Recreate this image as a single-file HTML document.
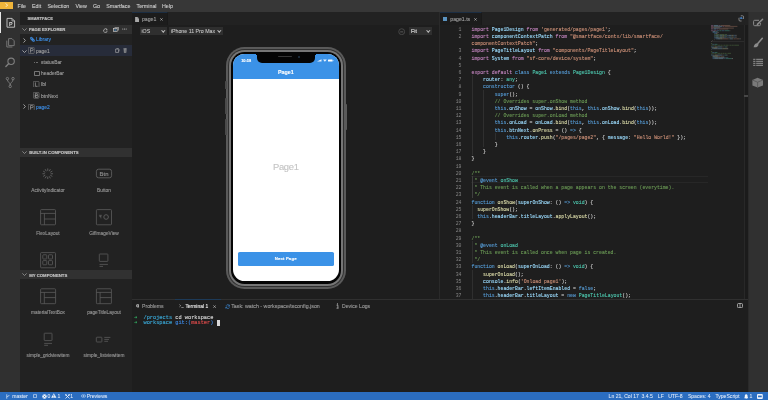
<!DOCTYPE html>
<html><head><meta charset="utf-8">
<style>
*{box-sizing:border-box;margin:0;padding:0}
html,body{width:768px;height:400px;overflow:hidden;}
body{will-change:transform;background:#1e1e1e;font-family:"Liberation Sans",sans-serif;}
.a{position:absolute}
.t{position:absolute;white-space:pre;line-height:1;-webkit-text-stroke:0.12px currentColor}
#menubar{left:0;top:0;width:768px;height:12px;background:#373737}
#menubar .m{position:absolute;top:2.8px;font-size:5.3px;color:#cdcdcd;-webkit-text-stroke:0.1px #cdcdcd;white-space:pre;line-height:6px}
#logo{left:0;top:1.5px;width:12.5px;height:7.5px;background:#efb43a}
#act{left:0;top:12px;width:20px;height:380px;background:#303030}
#side{left:20px;top:12px;width:112px;height:380px;background:#222222}
#ed1{left:132px;top:12px;width:308px;height:287px;background:#1e1e1e}
#ed2{left:440px;top:12px;width:308px;height:287px;background:#1e1e1e}
#panel{left:132px;top:299px;width:616px;height:93px;background:#1e1e1e;border-top:1px solid #303030}
#ract{left:748px;top:12px;width:20px;height:380px;background:#303030}
#status{left:0;top:392px;width:768px;height:8px;background:#2b6dc0}
.sh{left:0;width:112px;height:9px;background:#313131}
.sht{font-size:4.28px;font-weight:bold;color:#c8c8c8}
.tr{font-size:4.9px;color:#9e9e9e}
.box{border:0.7px solid #767676;border-radius:0.8px;}
.box span{position:absolute;left:0;right:0;top:0.5px;text-align:center;font-size:4.9px;line-height:1;color:#9a9a9a}
.lb{font-size:4.77px;color:#969696;text-align:center}
.sel{background:#2f2f2f}
.sel span{position:absolute;top:1.4px;font-size:5.27px;line-height:1;color:#c4c4c4;-webkit-text-stroke:0.08px #c4c4c4;white-space:pre}
.sel i{position:absolute;top:2.3px;width:2.6px;height:2.6px;border-right:0.8px solid #c0c0c0;border-bottom:0.8px solid #c0c0c0;transform:rotate(45deg)}
.cl{-webkit-text-stroke:0.1px currentColor;position:absolute;left:31.5px;height:7.2px;margin-top:-3.6px;line-height:7.2px;font-family:"Liberation Mono",monospace;font-size:4.83px;white-space:pre}
.ln{position:absolute;left:0;width:21.5px;text-align:right;height:7.2px;margin-top:-3.6px;line-height:7.2px;font-family:"Liberation Mono",monospace;font-size:4.83px;color:#858585}
.pt{font-size:5.1px;color:#9a9a9a}
.term{-webkit-text-stroke:0.15px currentColor;left:1.9px;margin-top:0.5px;font-family:"Liberation Mono",monospace;font-size:5.3px;color:#d0d0d0}
.st{top:1.9px;font-size:5.1px;color:#e6eefa;-webkit-text-stroke:0.04px #e6eefa}
</style></head><body>
<div id="menubar" class="a">
  <div id="logo" class="a"><svg class="a" style="left:4.6px;top:1.6px" width="3.4" height="4.4" viewBox="0 0 4 5"><path d="M0.6 0.5 L3.2 2.5 L0.6 4.5" fill="none" stroke="#fff6e0" stroke-width="0.9"/></svg></div>
  <div class="m" style="left:17.5px">File</div>
  <div class="m" style="left:32px">Edit</div>
  <div class="m" style="left:47.5px">Selection</div>
  <div class="m" style="left:75.5px">View</div>
  <div class="m" style="left:93px">Go</div>
  <div class="m" style="left:106.25px">Smartface</div>
  <div class="m" style="left:136.5px">Terminal</div>
  <div class="m" style="left:162px">Help</div>
</div>

<div id="act" class="a">
  <div class="a" style="left:0;top:0;width:1.1px;height:20.6px;background:#e8e8e8"></div>
  <svg class="a" style="left:0;top:0" width="20" height="80" viewBox="0 0 20 80">
    <g fill="none" stroke="#c8c8c8" stroke-width="0.9">
      <path d="M7 6.4 H12 L14.6 9 V15.2 H7 Z"/>
      <path d="M12 6.4 V9 H14.6" stroke-width="0.7"/>
    </g>
    <text x="10.7" y="14.1" text-anchor="middle" font-family="Liberation Sans" font-weight="bold" font-size="5.4" fill="#d8d8d8">P</text>
    <g fill="none" stroke="#7e7e7e" stroke-width="0.9">
      <path d="M8.6 26.6 H12 L14.2 28.8 V33.6 H8.6 Z"/>
      <path d="M6.8 28.6 V35 H12.4" />
    </g>
    <g fill="none" stroke="#7e7e7e" stroke-width="1.1">
      <circle cx="11.1" cy="49.3" r="3.2"/>
      <path d="M8.8 51.6 L5.9 54.6" stroke-width="1.4" stroke-linecap="round"/>
    </g>
    <g fill="none" stroke="#7e7e7e" stroke-width="0.9">
      <circle cx="7.4" cy="66.6" r="1.2"/>
      <circle cx="13" cy="66.6" r="1.2"/>
      <circle cx="10.2" cy="74.4" r="1.2"/>
      <path d="M7.4 67.8 C7.4 70 10.2 70.4 10.2 73.2 M13 67.8 C13 70 10.2 70.4 10.2 73.2"/>
    </g>
  </svg>
</div>


<div id="side" class="a">
  <div class="a" style="left:0;top:0;width:112px;height:13px;background:#212121"></div>
  <div class="t" style="left:7.5px;top:5.2px;font-size:4.1px;font-weight:bold;color:#c8c8c8">SMARTFACE</div>
  <!-- page explorer header -->
  <div class="a sh" style="top:13px"></div>
  <svg class="a" style="left:2.2px;top:16.2px" width="5" height="3" viewBox="0 0 5 3"><path d="M0.4 0.4 L2.5 2.5 L4.6 0.4" fill="none" stroke="#a8a8a8" stroke-width="0.7"/></svg>
  <div class="t sht" style="left:9px;top:16.1px">PAGE EXPLORER</div>
  <svg class="a" style="left:83.4px;top:15.6px" width="5" height="5" viewBox="0 0 10 10"><path d="M7.6 3 A3.6 3.6 0 1 0 8.4 5.6" fill="none" stroke="#bdbdbd" stroke-width="1.5"/><path d="M6.4 1.2 L8.6 3.2 L5.8 4" fill="none" stroke="#bdbdbd" stroke-width="1.3"/></svg>
  <svg class="a" style="left:93px;top:15px" width="6" height="5" viewBox="0 0 12 10"><rect x="0.8" y="2.8" width="7.6" height="6.4" fill="none" stroke="#c8c8c8" stroke-width="1.4"/><path d="M3 0.8 H11.2 V7" fill="none" stroke="#c8c8c8" stroke-width="1.3"/><rect x="2.6" y="4.8" width="4" height="2.6" fill="#4a86b8"/></svg>
  <svg class="a" style="left:101.8px;top:16px" width="5" height="2" viewBox="0 0 5 2"><circle cx="0.8" cy="1" r="0.55" fill="#c0c0c0"/><circle cx="2.5" cy="1" r="0.55" fill="#c0c0c0"/><circle cx="4.2" cy="1" r="0.55" fill="#c0c0c0"/></svg>
  <!-- library row -->
  <svg class="a" style="left:3.1px;top:26.3px" width="3" height="5" viewBox="0 0 3 5"><path d="M0.5 0.4 L2.4 2.5 L0.5 4.6" fill="none" stroke="#b0b0b0" stroke-width="0.85"/></svg>
  <svg class="a" style="left:9px;top:24px" width="8" height="8" viewBox="0 0 8 8"><path d="M2.3 2.3 L4.6 4.6" stroke="#3b82d0" stroke-width="2.7" stroke-linecap="round"/><circle cx="2.2" cy="2.2" r="0.55" fill="#26405e"/><circle cx="4.7" cy="4.7" r="0.55" fill="#26405e"/></svg>
  <div class="t tr" style="left:16px;top:26.3px;color:#3d8ee6">Library</div>
  <!-- page1 row selected -->
  <div class="a" style="left:0;top:33.2px;width:112px;height:11px;background:#272c3a"></div>
  <svg class="a" style="left:2.4px;top:37.6px" width="5" height="3" viewBox="0 0 5 3"><path d="M0.4 0.4 L2.5 2.5 L4.6 0.4" fill="none" stroke="#b0b0b0" stroke-width="0.85"/></svg>
  <svg class="a" style="left:8px;top:35.3px" width="6.6" height="6.8" viewBox="0 0 6.6 6.8"><rect x="0.35" y="0.35" width="5.9" height="6.1" rx="0.8" fill="none" stroke="#767676" stroke-width="0.7"/><path d="M2.5 5.6 V1.5 H4 A1.1 1.1 0 0 1 4 3.7 H2.5" fill="none" stroke="#a0a0a0" stroke-width="0.7"/></svg>
  <div class="t tr" style="left:16px;top:37.5px">page1</div>
  <svg class="a" style="left:95.2px;top:36.4px" width="4.6" height="4.8" viewBox="0 0 9 10"><path d="M1 2.2 H5.4 L7.2 4 V9.2 H1 Z" fill="none" stroke="#bdbdbd" stroke-width="1.2"/><path d="M3 1 H7 L8.2 2.2 V7" fill="none" stroke="#bdbdbd" stroke-width="1"/></svg>
  <svg class="a" style="left:103.4px;top:36.2px" width="4.2" height="5" viewBox="0 0 8 9.5"><path d="M0.4 1.6 H7.6 M2.8 0.6 H5.2" stroke="#bdbdbd" stroke-width="1"/><path d="M1.4 2.6 H6.6 L6.2 9 H1.8 Z" fill="#9a9a9a"/><path d="M3.2 3.6 V8 M4.8 3.6 V8" stroke="#2a3040" stroke-width="0.6"/></svg>
  <!-- children -->
  <div class="a" style="left:13.6px;top:49.8px;width:5.6px;height:0.9px;background:repeating-linear-gradient(90deg,#6c6c6c 0 1.1px,transparent 1.1px 1.5px)"></div>
  <div class="t tr" style="left:21.1px;top:48.8px">statusBar</div>
  <div class="a" style="left:13.8px;top:58.8px;width:5.8px;height:4.8px;border:0.7px solid #767676;border-top-width:1px;border-radius:0.8px"></div>
  <div class="t tr" style="left:21.1px;top:60.1px">headerBar</div>
  <svg class="a" style="left:13.4px;top:68.9px" width="6.4" height="6.6" viewBox="0 0 6.4 6.6"><rect x="0.35" y="0.35" width="5.7" height="5.9" rx="0.8" fill="none" stroke="#767676" stroke-width="0.7"/><path d="M2.4 1.4 V5.3 H4.5" fill="none" stroke="#a0a0a0" stroke-width="0.7"/></svg>
  <div class="t tr" style="left:21.1px;top:71.3px">lbl</div>
  <svg class="a" style="left:13.4px;top:80.2px" width="6.4" height="6.6" viewBox="0 0 6.4 6.6"><rect x="0.35" y="0.35" width="5.7" height="5.9" rx="0.8" fill="none" stroke="#767676" stroke-width="0.7"/><path d="M2.3 1.4 H3.9 A1 1 0 0 1 3.9 3.3 H2.3 M2.3 3.3 H4.1 A1.05 1.05 0 0 1 4.1 5.4 H2.3 Z M2.3 1.4 V5.4" fill="none" stroke="#a0a0a0" stroke-width="0.7"/></svg>
  <div class="t tr" style="left:21.1px;top:82.6px">btnNext</div>
  <!-- page2 -->
  <svg class="a" style="left:3.1px;top:92.4px" width="3" height="5" viewBox="0 0 3 5"><path d="M0.5 0.4 L2.4 2.5 L0.5 4.6" fill="none" stroke="#b0b0b0" stroke-width="0.85"/></svg>
  <svg class="a" style="left:8px;top:91.5px" width="6.6" height="6.8" viewBox="0 0 6.6 6.8"><rect x="0.35" y="0.35" width="5.9" height="6.1" rx="0.8" fill="none" stroke="#767676" stroke-width="0.7"/><path d="M2.5 5.6 V1.5 H4 A1.1 1.1 0 0 1 4 3.7 H2.5" fill="none" stroke="#a0a0a0" stroke-width="0.7"/></svg>
  <div class="t tr" style="left:16px;top:93.8px;color:#3d8ee6">page2</div>

  <!-- built in components -->
  <div class="a sh" style="top:136px"></div>
  <svg class="a" style="left:2.2px;top:139.2px" width="5" height="3" viewBox="0 0 5 3"><path d="M0.4 0.4 L2.5 2.5 L4.6 0.4" fill="none" stroke="#a8a8a8" stroke-width="0.7"/></svg>
  <div class="t sht" style="left:9.2px;top:139.1px">BUILT-IN COMPONENTS</div>

  <!-- component grid (coordinates relative to sidebar: abs x-20, y-12) -->
  <svg class="a" style="left:0;top:0" width="112" height="380" viewBox="0 0 112 380">
    <g fill="none" stroke="#5c5c5c" stroke-width="0.8">
      <!-- spinner center 27.75,161.75 -->
      <g stroke="#5c5c5c" stroke-width="1" stroke-linecap="round"><path d="M31.05 161.75 L32.65 161.75 M30.61 163.40 L31.99 164.20 M29.40 164.61 L30.20 165.99 M27.75 165.05 L27.75 166.65 M26.10 164.61 L25.30 165.99 M24.89 163.40 L23.51 164.20 M24.45 161.75 L22.85 161.75 M24.89 160.10 L23.51 159.30 M26.10 158.89 L25.30 157.51 M27.75 158.45 L27.75 156.85 M29.40 158.89 L30.20 157.51 M30.61 160.10 L31.99 159.30"/></g>
      <!-- Btn -->
      <rect x="76.4" y="157.2" width="15.2" height="8.6" rx="2.2" stroke="#707070" stroke-width="0.7"/>
      <!-- FlexLayout -->
      <rect x="20.6" y="197.6" width="14.9" height="15.2" rx="0.8"/>
      <path d="M20.6 201.4 H35.5 M24.4 201.4 V212.8 M24.4 207 H35.5"/>
      <!-- GifImageView -->
      <rect x="76.4" y="197.6" width="15.1" height="15.2" rx="0.8"/>
      <circle cx="86.1" cy="205" r="2.3" stroke-width="0.95"/>
      <path d="M78.9 203.3 H81.9 M80.4 203.3 L81 206.4 M79.4 204.5 H81.4" stroke-width="0.75"/>
      <!-- GridView -->
      <rect x="20.6" y="240.6" width="14.9" height="15.2" rx="0.8"/>
      <rect x="22.8" y="242.8" width="4" height="4.2" rx="0.6"/>
      <rect x="28.5" y="242.8" width="4" height="4.2" rx="0.6"/>
      <rect x="22.8" y="248.6" width="4" height="4.2" rx="0.6"/>
      <rect x="28.5" y="248.6" width="4" height="4.2" rx="0.6"/>
      <!-- gridview item -->
      <rect x="79.3" y="242" width="8.6" height="7.4" rx="0.5"/>
      <path d="M79.5 252.4 H87.9 M79.5 254.4 H83"/>
      <!-- materialTextBox -->
      <rect x="20.6" y="276.8" width="15" height="14.9" rx="0.8"/>
      <path d="M20.6 280.4 H35.6 M24.3 280.4 V291.7 M24.3 285.6 H35.6"/>
      <!-- pageTitleLayout -->
      <rect x="76.4" y="276.8" width="15" height="14.9" rx="0.8"/>
      <path d="M76.4 280.4 H91.4 M80.1 280.4 V291.7 M80.1 285.6 H91.4"/>
      <!-- simple_gridviewitem -->
      <rect x="24.2" y="321.2" width="7.8" height="7.4" rx="0.5"/>
      <path d="M24.2 331.4 H32 M24.2 333.3 H28"/>
      <!-- simple_listviewitem -->
      <rect x="76.3" y="325.2" width="5.6" height="4.8" rx="0.6"/>
      <path d="M84.3 325.4 H90.4 M84.3 327.4 H89 M84.3 329.3 H88"/>
    </g>
    <text x="84" y="164.4" text-anchor="middle" font-family="Liberation Sans" font-size="5.9" fill="#8e8e8e" stroke="#8e8e8e" stroke-width="0.15">Btn</text>
  </svg>
  <div class="t lb" style="left:0;width:56px;top:176.5px">ActivityIndicator</div>
  <div class="t lb" style="left:56px;width:56px;top:176.5px">Button</div>
  <div class="t lb" style="left:0;width:56px;top:219.5px">FlexLayout</div>
  <div class="t lb" style="left:56px;width:56px;top:219.5px">GifImageView</div>
  <div class="t lb" style="left:0;width:56px;top:298.9px">materialTextBox</div>
  <div class="t lb" style="left:56px;width:56px;top:298.9px">pageTitleLayout</div>
  <div class="t lb" style="left:0;width:56px;top:342.3px">simple_gridviewitem</div>
  <div class="t lb" style="left:56px;width:56px;top:342.3px">simple_listviewitem</div>
  <!-- my components -->
  <div class="a sh" style="top:257.8px"></div>
  <svg class="a" style="left:2.2px;top:261.1px" width="5" height="3" viewBox="0 0 5 3"><path d="M0.4 0.4 L2.5 2.5 L4.6 0.4" fill="none" stroke="#a8a8a8" stroke-width="0.7"/></svg>
  <div class="t sht" style="left:9.2px;top:261.5px">MY COMPONENTS</div>
</div>


<div id="ed1" class="a">
  <div class="a" style="left:0;top:0;width:308px;height:13px;background:#222222"></div>
  <div class="a" style="left:0;top:0;width:36px;height:13px;background:#1c1c1c;border-top:0.8px solid #1b2d42;border-right:0.6px solid #191919"></div>
  <svg class="a" style="left:2.8px;top:4.6px" width="4.2" height="5" viewBox="0 0 8 10"><path d="M0 0 H5 L8 3 V10 H0 Z" fill="#a8a8a8"/><path d="M5 0 V3 H8" fill="#666"/></svg>
  <div class="t" style="left:9.9px;top:4.7px;font-size:5.2px;color:#9d9d9d">page1</div>
  <svg class="a" style="left:28.2px;top:6px" width="2.9" height="2.9" viewBox="0 0 3 3"><path d="M0.3 0.3 L2.7 2.7 M2.7 0.3 L0.3 2.7" stroke="#bdbdbd" stroke-width="0.7"/></svg>
  <!-- toolbar -->
  <div class="a sel" style="left:7.8px;top:15.2px;width:27px;height:7.7px"><span style="left:1.6px">iOS</span><i style="left:22px"></i></div>
  <div class="a sel" style="left:37.2px;top:15.2px;width:53.5px;height:7.7px"><span style="left:1.6px">iPhone 11 Pro Max</span><i style="left:48.8px"></i></div>
  <svg class="a" style="left:265.8px;top:16px" width="7.4" height="7.4" viewBox="0 0 10 10"><circle cx="5" cy="5" r="4" fill="none" stroke="#505050" stroke-width="1.1"/><path d="M3 4.4 H7 V6 H3 Z" fill="#505050"/></svg>
  <div class="a sel" style="left:277px;top:15.3px;width:22.7px;height:7.5px"><span style="left:2px;color:#d0d0d0;-webkit-text-stroke:0.2px #d0d0d0">Fit</span><i style="left:18.2px;top:1.9px"></i></div>
  <!-- phone -->
  <div class="a" style="left:94px;top:35px;width:120px;height:242px;border-radius:18.5px;background:#5a5a5a">
    <div class="a" style="left:-1px;top:33.5px;width:1.6px;height:8.7px;background:#4a4a4a;border-radius:0.6px"></div>
    <div class="a" style="left:-1px;top:51px;width:1.6px;height:16.2px;background:#4a4a4a;border-radius:0.6px"></div>
    <div class="a" style="left:-1px;top:72.2px;width:1.6px;height:16.2px;background:#4a4a4a;border-radius:0.6px"></div>
    <div class="a" style="left:118.6px;top:56.7px;width:2.6px;height:26.3px;background:#5a5a5a;border-radius:0.8px"></div>
    <div class="a" style="left:2px;top:2px;right:2px;bottom:2px;border-radius:16.5px;background:#303030"></div>
    <div class="a" style="left:3px;top:3px;right:3px;bottom:3px;border-radius:15.5px;background:#767676"></div>
    <div class="a" style="left:5px;top:4.6px;right:5px;bottom:5px;border-radius:13.5px;background:#050505"></div>
    <div class="a" style="left:7px;top:6.6px;right:7.4px;bottom:8px;border-radius:11.5px;background:#ffffff;overflow:hidden">
      <div class="a" style="left:0;top:0;width:100%;height:25.5px;background:#3b92e7"></div>
      <div class="a" style="left:23.6px;top:-1px;width:58.6px;height:10.5px;background:#050505;border-radius:0 0 5px 5px"></div>
      <div class="a" style="left:20.8px;top:0;width:2.8px;height:2.8px;background:radial-gradient(circle at 0 100%,transparent 2.8px,#050505 2.9px)"></div>
      <div class="a" style="left:82.2px;top:0;width:2.8px;height:2.8px;background:radial-gradient(circle at 100% 100%,transparent 2.8px,#050505 2.9px)"></div>
      <div class="a" style="left:44.6px;top:2.5px;width:14.5px;height:1px;background:#363636;border-radius:1px"></div>
      <div class="a" style="left:65.2px;top:2.1px;width:2px;height:2px;background:#213548;border-radius:50%"></div>
      <div class="t" style="left:8.2px;top:5.4px;font-size:3.9px;font-weight:bold;color:#fff">10:58</div>
      <svg class="a" style="left:83.6px;top:5.2px" width="17.2" height="3" viewBox="0 0 17.2 3"><path d="M0 2.6 H4.5 V0.3 Z" fill="#e8f1fc"/><path d="M6 0.4 H9.8 L7.9 2.8 Z" fill="#eef5fd"/><rect x="11" y="0.5" width="4.6" height="2.1" rx="0.4" fill="#ffffff"/><rect x="15.7" y="1" width="0.8" height="1.1" fill="#b8d6f7"/></svg>
      <div class="t" style="left:0;width:100%;text-align:center;top:16.4px;font-size:5.3px;font-weight:bold;color:#fff">Page1</div>
      <div class="t" style="left:0;width:100%;text-align:center;top:108.6px;font-size:9.4px;letter-spacing:-0.25px;color:#c4c4c4">Page1</div>
      <div class="a" style="left:4.8px;top:198.5px;width:95.8px;height:14px;background:#3b92e7;border-radius:1.6px"></div>
      <div class="t" style="left:4.8px;width:95.8px;text-align:center;top:203.4px;font-size:4.25px;letter-spacing:0.16px;font-weight:bold;color:#fff">Next Page</div>
    </div>
  </div>
  <div class="a" style="left:307.3px;top:0;width:0.9px;height:287px;background:#2a2a2a"></div>
</div>


<div id="ed2" class="a">
  <div class="a" style="left:0;top:0;width:308px;height:13px;background:#222222"></div>
  <div class="a" style="left:0;top:0;width:41.8px;height:13px;background:#1c1c1c;border-top:0.8px solid #1b2d42;border-right:0.6px solid #191919"></div>
  <div class="a" style="left:3.3px;top:4.6px;width:4.2px;height:4.4px;background:#5b93c0"></div>
  <div class="t" style="left:10.3px;top:4.7px;font-size:5.2px;color:#9d9d9d">page1.ts</div>
  <svg class="a" style="left:34.4px;top:6px" width="2.9" height="2.9" viewBox="0 0 3 3"><path d="M0.3 0.3 L2.7 2.7 M2.7 0.3 L0.3 2.7" stroke="#bdbdbd" stroke-width="0.7"/></svg>
  <svg class="a" style="left:298px;top:3px" width="6.4" height="6.8" viewBox="0 0 16 17"><path d="M2.5 7 V12.5 A2.5 2.5 0 0 0 5 15 H9" fill="none" stroke="#9a9a9a" stroke-width="2"/><path d="M7 2 H11.5 A2.5 2.5 0 0 1 14 4.5 V10" fill="none" stroke="#9a9a9a" stroke-width="2"/><path d="M3.5 7 L9 5 L12.5 8.5 L7 10.5 Z" fill="#4177b4"/></svg>
  <!-- current line highlight line 21 -->
  <div class="a" style="left:31px;top:164.4px;width:237.3px;height:6.6px;border-top:0.6px solid #272727;border-bottom:0.6px solid #272727"></div>
  <div class="a" style="left:0;top:0;width:308px;height:287px;overflow:hidden">
  <div id="codewrap" class="a" style="left:0;top:-12px;width:308px;height:300px">
<div class="a" style="left:31.50px;top:75.40px;width:0.6px;height:7.20px;background:#2f2f2f"></div>
<div class="a" style="left:31.50px;top:82.60px;width:0.6px;height:7.20px;background:#2f2f2f"></div>
<div class="a" style="left:31.50px;top:89.80px;width:0.6px;height:7.20px;background:#2f2f2f"></div>
<div class="a" style="left:43.10px;top:89.80px;width:0.6px;height:7.20px;background:#2f2f2f"></div>
<div class="a" style="left:31.50px;top:97.00px;width:0.6px;height:7.20px;background:#2f2f2f"></div>
<div class="a" style="left:43.10px;top:97.00px;width:0.6px;height:7.20px;background:#2f2f2f"></div>
<div class="a" style="left:31.50px;top:104.20px;width:0.6px;height:7.20px;background:#2f2f2f"></div>
<div class="a" style="left:43.10px;top:104.20px;width:0.6px;height:7.20px;background:#2f2f2f"></div>
<div class="a" style="left:31.50px;top:111.40px;width:0.6px;height:7.20px;background:#2f2f2f"></div>
<div class="a" style="left:43.10px;top:111.40px;width:0.6px;height:7.20px;background:#2f2f2f"></div>
<div class="a" style="left:31.50px;top:118.60px;width:0.6px;height:7.20px;background:#2f2f2f"></div>
<div class="a" style="left:43.10px;top:118.60px;width:0.6px;height:7.20px;background:#2f2f2f"></div>
<div class="a" style="left:31.50px;top:125.80px;width:0.6px;height:7.20px;background:#2f2f2f"></div>
<div class="a" style="left:43.10px;top:125.80px;width:0.6px;height:7.20px;background:#2f2f2f"></div>
<div class="a" style="left:31.50px;top:133.00px;width:0.6px;height:7.20px;background:#2f2f2f"></div>
<div class="a" style="left:43.10px;top:133.00px;width:0.6px;height:7.20px;background:#2f2f2f"></div>
<div class="a" style="left:54.70px;top:133.00px;width:0.6px;height:7.20px;background:#2f2f2f"></div>
<div class="a" style="left:31.50px;top:140.20px;width:0.6px;height:7.20px;background:#2f2f2f"></div>
<div class="a" style="left:43.10px;top:140.20px;width:0.6px;height:7.20px;background:#2f2f2f"></div>
<div class="a" style="left:31.50px;top:147.40px;width:0.6px;height:7.20px;background:#2f2f2f"></div>
<div class="a" style="left:31.50px;top:176.20px;width:0.6px;height:7.20px;background:#404040"></div>
<div class="a" style="left:31.50px;top:183.40px;width:0.6px;height:7.20px;background:#404040"></div>
<div class="a" style="left:31.50px;top:190.60px;width:0.6px;height:7.20px;background:#404040"></div>
<div class="a" style="left:31.50px;top:205.00px;width:0.6px;height:7.20px;background:#2f2f2f"></div>
<div class="a" style="left:31.50px;top:212.20px;width:0.6px;height:7.20px;background:#2f2f2f"></div>
<div class="a" style="left:31.50px;top:241.00px;width:0.6px;height:7.20px;background:#2f2f2f"></div>
<div class="a" style="left:31.50px;top:248.20px;width:0.6px;height:7.20px;background:#2f2f2f"></div>
<div class="a" style="left:31.50px;top:255.40px;width:0.6px;height:7.20px;background:#2f2f2f"></div>
<div class="a" style="left:31.50px;top:269.80px;width:0.6px;height:7.20px;background:#2f2f2f"></div>
<div class="a" style="left:31.50px;top:277.00px;width:0.6px;height:7.20px;background:#2f2f2f"></div>
<div class="a" style="left:31.50px;top:284.20px;width:0.6px;height:7.20px;background:#2f2f2f"></div>
<div class="a" style="left:31.50px;top:291.40px;width:0.6px;height:7.20px;background:#2f2f2f"></div>
<div class="cl" style="top:29.35px"><span style="color:#c586c0">import</span><span style="color:#d4d4d4"> </span><span style="color:#9cdcfe">Page1Design</span><span style="color:#d4d4d4"> </span><span style="color:#c586c0">from</span><span style="color:#d4d4d4"> </span><span style="color:#ce9178">&#x27;generated/pages/page1&#x27;</span><span style="color:#d4d4d4">;</span></div>
<div class="ln" style="top:29.35px">1</div>
<div class="cl" style="top:36.55px"><span style="color:#c586c0">import</span><span style="color:#d4d4d4"> </span><span style="color:#9cdcfe">componentContextPatch</span><span style="color:#d4d4d4"> </span><span style="color:#c586c0">from</span><span style="color:#d4d4d4"> </span><span style="color:#ce9178">&quot;@smartface/contx/lib/smartface/</span></div>
<div class="ln" style="top:36.55px">2</div>
<div class="cl" style="top:43.75px"><span style="color:#ce9178">componentContextPatch&quot;</span><span style="color:#d4d4d4">;</span></div>
<div class="cl" style="top:50.95px"><span style="color:#c586c0">import</span><span style="color:#d4d4d4"> </span><span style="color:#9cdcfe">PageTitleLayout</span><span style="color:#d4d4d4"> </span><span style="color:#c586c0">from</span><span style="color:#d4d4d4"> </span><span style="color:#ce9178">&quot;components/PageTitleLayout&quot;</span><span style="color:#d4d4d4">;</span></div>
<div class="ln" style="top:50.95px">3</div>
<div class="cl" style="top:58.15px"><span style="color:#c586c0">import</span><span style="color:#d4d4d4"> </span><span style="color:#9cdcfe">System</span><span style="color:#d4d4d4"> </span><span style="color:#c586c0">from</span><span style="color:#d4d4d4"> </span><span style="color:#ce9178">&quot;sf-core/device/system&quot;</span><span style="color:#d4d4d4">;</span></div>
<div class="ln" style="top:58.15px">4</div>
<div class="cl" style="top:65.35px"></div>
<div class="ln" style="top:65.35px">5</div>
<div class="cl" style="top:72.55px"><span style="color:#c586c0">export</span><span style="color:#d4d4d4"> </span><span style="color:#c586c0">default</span><span style="color:#d4d4d4"> </span><span style="color:#569cd6">class</span><span style="color:#d4d4d4"> </span><span style="color:#4ec9b0">Page1</span><span style="color:#d4d4d4"> </span><span style="color:#569cd6">extends</span><span style="color:#d4d4d4"> </span><span style="color:#4ec9b0">Page1Design</span><span style="color:#d4d4d4"> {</span></div>
<div class="ln" style="top:72.55px">6</div>
<div class="cl" style="top:79.75px"><span style="color:#d4d4d4">    </span><span style="color:#9cdcfe">router</span><span style="color:#d4d4d4">: </span><span style="color:#4ec9b0">any</span><span style="color:#d4d4d4">;</span></div>
<div class="ln" style="top:79.75px">7</div>
<div class="cl" style="top:86.95px"><span style="color:#d4d4d4">    </span><span style="color:#569cd6">constructor</span><span style="color:#d4d4d4"> () {</span></div>
<div class="ln" style="top:86.95px">8</div>
<div class="cl" style="top:94.15px"><span style="color:#d4d4d4">        </span><span style="color:#569cd6">super</span><span style="color:#d4d4d4">();</span></div>
<div class="ln" style="top:94.15px">9</div>
<div class="cl" style="top:101.35px"><span style="color:#d4d4d4">        </span><span style="color:#6a9955">// Overrides super.onShow method</span></div>
<div class="ln" style="top:101.35px">10</div>
<div class="cl" style="top:108.55px"><span style="color:#d4d4d4">        </span><span style="color:#569cd6">this</span><span style="color:#d4d4d4">.</span><span style="color:#9cdcfe">onShow</span><span style="color:#d4d4d4"> = </span><span style="color:#9cdcfe">onShow</span><span style="color:#d4d4d4">.</span><span style="color:#dcdcaa">bind</span><span style="color:#d4d4d4">(</span><span style="color:#569cd6">this</span><span style="color:#d4d4d4">, </span><span style="color:#569cd6">this</span><span style="color:#d4d4d4">.</span><span style="color:#9cdcfe">onShow</span><span style="color:#d4d4d4">.</span><span style="color:#dcdcaa">bind</span><span style="color:#d4d4d4">(</span><span style="color:#569cd6">this</span><span style="color:#d4d4d4">));</span></div>
<div class="ln" style="top:108.55px">11</div>
<div class="cl" style="top:115.75px"><span style="color:#d4d4d4">        </span><span style="color:#6a9955">// Overrides super.onLoad method</span></div>
<div class="ln" style="top:115.75px">12</div>
<div class="cl" style="top:122.95px"><span style="color:#d4d4d4">        </span><span style="color:#569cd6">this</span><span style="color:#d4d4d4">.</span><span style="color:#9cdcfe">onLoad</span><span style="color:#d4d4d4"> = </span><span style="color:#9cdcfe">onLoad</span><span style="color:#d4d4d4">.</span><span style="color:#dcdcaa">bind</span><span style="color:#d4d4d4">(</span><span style="color:#569cd6">this</span><span style="color:#d4d4d4">, </span><span style="color:#569cd6">this</span><span style="color:#d4d4d4">.</span><span style="color:#9cdcfe">onLoad</span><span style="color:#d4d4d4">.</span><span style="color:#dcdcaa">bind</span><span style="color:#d4d4d4">(</span><span style="color:#569cd6">this</span><span style="color:#d4d4d4">));</span></div>
<div class="ln" style="top:122.95px">13</div>
<div class="cl" style="top:130.15px"><span style="color:#d4d4d4">        </span><span style="color:#569cd6">this</span><span style="color:#d4d4d4">.</span><span style="color:#9cdcfe">btnNext</span><span style="color:#d4d4d4">.</span><span style="color:#dcdcaa">onPress</span><span style="color:#d4d4d4"> = () </span><span style="color:#569cd6">=&gt;</span><span style="color:#d4d4d4"> {</span></div>
<div class="ln" style="top:130.15px">14</div>
<div class="cl" style="top:137.35px"><span style="color:#d4d4d4">            </span><span style="color:#569cd6">this</span><span style="color:#d4d4d4">.</span><span style="color:#9cdcfe">router</span><span style="color:#d4d4d4">.</span><span style="color:#dcdcaa">push</span><span style="color:#d4d4d4">(</span><span style="color:#ce9178">&quot;/pages/page2&quot;</span><span style="color:#d4d4d4">, { </span><span style="color:#9cdcfe">message</span><span style="color:#d4d4d4">: </span><span style="color:#ce9178">&quot;Hello World!&quot;</span><span style="color:#d4d4d4"> });</span></div>
<div class="ln" style="top:137.35px">15</div>
<div class="cl" style="top:144.55px"><span style="color:#d4d4d4">        }</span></div>
<div class="ln" style="top:144.55px">16</div>
<div class="cl" style="top:151.75px"><span style="color:#d4d4d4">    }</span></div>
<div class="ln" style="top:151.75px">17</div>
<div class="cl" style="top:158.95px"><span style="color:#d4d4d4">}</span></div>
<div class="ln" style="top:158.95px">18</div>
<div class="cl" style="top:166.15px"></div>
<div class="ln" style="top:166.15px">19</div>
<div class="cl" style="top:173.35px"><span style="color:#6a9955">/**</span></div>
<div class="ln" style="top:173.35px">20</div>
<div class="cl" style="top:180.55px"><span style="color:#6a9955"> * </span><span style="color:#569cd6">@event</span><span style="color:#6a9955"> </span><span style="color:#4ec9b0">onShow</span></div>
<div class="ln" style="top:180.55px">21</div>
<div class="cl" style="top:187.75px"><span style="color:#6a9955"> * This event is called when a page appears on the screen (everytime).</span></div>
<div class="ln" style="top:187.75px">22</div>
<div class="cl" style="top:194.95px"><span style="color:#6a9955"> */</span></div>
<div class="ln" style="top:194.95px">23</div>
<div class="cl" style="top:202.15px"><span style="color:#569cd6">function</span><span style="color:#d4d4d4"> </span><span style="color:#dcdcaa">onShow</span><span style="color:#d4d4d4">(</span><span style="color:#9cdcfe">superOnShow</span><span style="color:#d4d4d4">: () </span><span style="color:#569cd6">=&gt;</span><span style="color:#d4d4d4"> </span><span style="color:#4ec9b0">void</span><span style="color:#d4d4d4">) {</span></div>
<div class="ln" style="top:202.15px">24</div>
<div class="cl" style="top:209.35px"><span style="color:#d4d4d4">  </span><span style="color:#dcdcaa">superOnShow</span><span style="color:#d4d4d4">();</span></div>
<div class="ln" style="top:209.35px">25</div>
<div class="cl" style="top:216.55px"><span style="color:#d4d4d4">  </span><span style="color:#569cd6">this</span><span style="color:#d4d4d4">.</span><span style="color:#9cdcfe">headerBar</span><span style="color:#d4d4d4">.</span><span style="color:#9cdcfe">titleLayout</span><span style="color:#d4d4d4">.</span><span style="color:#dcdcaa">applyLayout</span><span style="color:#d4d4d4">();</span></div>
<div class="ln" style="top:216.55px">26</div>
<div class="cl" style="top:223.75px"><span style="color:#d4d4d4">}</span></div>
<div class="ln" style="top:223.75px">27</div>
<div class="cl" style="top:230.95px"></div>
<div class="ln" style="top:230.95px">28</div>
<div class="cl" style="top:238.15px"><span style="color:#6a9955">/**</span></div>
<div class="ln" style="top:238.15px">29</div>
<div class="cl" style="top:245.35px"><span style="color:#6a9955"> * </span><span style="color:#569cd6">@event</span><span style="color:#6a9955"> </span><span style="color:#4ec9b0">onLoad</span></div>
<div class="ln" style="top:245.35px">30</div>
<div class="cl" style="top:252.55px"><span style="color:#6a9955"> * This event is called once when page is created.</span></div>
<div class="ln" style="top:252.55px">31</div>
<div class="cl" style="top:259.75px"><span style="color:#6a9955"> */</span></div>
<div class="ln" style="top:259.75px">32</div>
<div class="cl" style="top:266.95px"><span style="color:#569cd6">function</span><span style="color:#d4d4d4"> </span><span style="color:#dcdcaa">onLoad</span><span style="color:#d4d4d4">(</span><span style="color:#9cdcfe">superOnLoad</span><span style="color:#d4d4d4">: () </span><span style="color:#569cd6">=&gt;</span><span style="color:#d4d4d4"> </span><span style="color:#4ec9b0">void</span><span style="color:#d4d4d4">) {</span></div>
<div class="ln" style="top:266.95px">33</div>
<div class="cl" style="top:274.15px"><span style="color:#d4d4d4">    </span><span style="color:#dcdcaa">superOnLoad</span><span style="color:#d4d4d4">();</span></div>
<div class="ln" style="top:274.15px">34</div>
<div class="cl" style="top:281.35px"><span style="color:#d4d4d4">    </span><span style="color:#9cdcfe">console</span><span style="color:#d4d4d4">.</span><span style="color:#dcdcaa">info</span><span style="color:#d4d4d4">(</span><span style="color:#ce9178">&#x27;Onload page1&#x27;</span><span style="color:#d4d4d4">);</span></div>
<div class="ln" style="top:281.35px">35</div>
<div class="cl" style="top:288.55px"><span style="color:#d4d4d4">    </span><span style="color:#569cd6">this</span><span style="color:#d4d4d4">.</span><span style="color:#9cdcfe">headerBar</span><span style="color:#d4d4d4">.</span><span style="color:#9cdcfe">leftItemEnabled</span><span style="color:#d4d4d4"> = </span><span style="color:#569cd6">false</span><span style="color:#d4d4d4">;</span></div>
<div class="ln" style="top:288.55px">36</div>
<div class="cl" style="top:295.75px"><span style="color:#d4d4d4">    </span><span style="color:#569cd6">this</span><span style="color:#d4d4d4">.</span><span style="color:#9cdcfe">headerBar</span><span style="color:#d4d4d4">.</span><span style="color:#9cdcfe">titleLayout</span><span style="color:#d4d4d4"> = </span><span style="color:#569cd6">new</span><span style="color:#d4d4d4"> </span><span style="color:#4ec9b0">PageTitleLayout</span><span style="color:#d4d4d4">();</span></div>
<div class="ln" style="top:295.75px">37</div>
  </div>
  </div>
  <div class="a" style="left:271px;top:29.2px;width:33px;height:1.2px;background:#2c2c2c"></div>
<svg class="a" style="left:271px;top:13px;opacity:0.45" width="33" height="36" viewBox="0 0 33 36"><rect x="0.00" y="0.00" width="2.40" height="0.75" fill="#c586c0"/><rect x="2.80" y="0.00" width="4.40" height="0.75" fill="#9cdcfe"/><rect x="7.60" y="0.00" width="1.60" height="0.75" fill="#c586c0"/><rect x="9.60" y="0.00" width="9.20" height="0.75" fill="#ce9178"/><rect x="18.80" y="0.00" width="0.40" height="0.75" fill="#d4d4d4"/><rect x="0.00" y="0.90" width="2.40" height="0.75" fill="#c586c0"/><rect x="2.80" y="0.90" width="8.40" height="0.75" fill="#9cdcfe"/><rect x="11.60" y="0.90" width="1.60" height="0.75" fill="#c586c0"/><rect x="13.60" y="0.90" width="12.80" height="0.75" fill="#ce9178"/><rect x="0.00" y="1.80" width="8.80" height="0.75" fill="#ce9178"/><rect x="8.80" y="1.80" width="0.40" height="0.75" fill="#d4d4d4"/><rect x="0.00" y="2.70" width="2.40" height="0.75" fill="#c586c0"/><rect x="2.80" y="2.70" width="6.00" height="0.75" fill="#9cdcfe"/><rect x="9.20" y="2.70" width="1.60" height="0.75" fill="#c586c0"/><rect x="11.20" y="2.70" width="11.20" height="0.75" fill="#ce9178"/><rect x="22.40" y="2.70" width="0.40" height="0.75" fill="#d4d4d4"/><rect x="0.00" y="3.60" width="2.40" height="0.75" fill="#c586c0"/><rect x="2.80" y="3.60" width="2.40" height="0.75" fill="#9cdcfe"/><rect x="5.60" y="3.60" width="1.60" height="0.75" fill="#c586c0"/><rect x="7.60" y="3.60" width="9.20" height="0.75" fill="#ce9178"/><rect x="16.80" y="3.60" width="0.40" height="0.75" fill="#d4d4d4"/><rect x="0.00" y="5.40" width="2.40" height="0.75" fill="#c586c0"/><rect x="2.80" y="5.40" width="2.80" height="0.75" fill="#c586c0"/><rect x="6.00" y="5.40" width="2.00" height="0.75" fill="#569cd6"/><rect x="8.40" y="5.40" width="2.00" height="0.75" fill="#4ec9b0"/><rect x="10.80" y="5.40" width="2.80" height="0.75" fill="#569cd6"/><rect x="14.00" y="5.40" width="4.40" height="0.75" fill="#4ec9b0"/><rect x="18.80" y="5.40" width="0.40" height="0.75" fill="#d4d4d4"/><rect x="1.60" y="6.30" width="2.40" height="0.75" fill="#9cdcfe"/><rect x="4.00" y="6.30" width="0.40" height="0.75" fill="#d4d4d4"/><rect x="4.80" y="6.30" width="1.20" height="0.75" fill="#4ec9b0"/><rect x="6.00" y="6.30" width="0.40" height="0.75" fill="#d4d4d4"/><rect x="1.60" y="7.20" width="4.40" height="0.75" fill="#569cd6"/><rect x="6.40" y="7.20" width="0.80" height="0.75" fill="#d4d4d4"/><rect x="7.60" y="7.20" width="0.40" height="0.75" fill="#d4d4d4"/><rect x="3.20" y="8.10" width="2.00" height="0.75" fill="#569cd6"/><rect x="5.20" y="8.10" width="1.20" height="0.75" fill="#d4d4d4"/><rect x="3.20" y="9.00" width="0.80" height="0.75" fill="#6a9955"/><rect x="4.40" y="9.00" width="3.60" height="0.75" fill="#6a9955"/><rect x="8.40" y="9.00" width="4.80" height="0.75" fill="#6a9955"/><rect x="13.60" y="9.00" width="2.40" height="0.75" fill="#6a9955"/><rect x="3.20" y="9.90" width="1.60" height="0.75" fill="#569cd6"/><rect x="4.80" y="9.90" width="0.40" height="0.75" fill="#d4d4d4"/><rect x="5.20" y="9.90" width="2.40" height="0.75" fill="#9cdcfe"/><rect x="8.00" y="9.90" width="0.40" height="0.75" fill="#d4d4d4"/><rect x="8.80" y="9.90" width="2.40" height="0.75" fill="#9cdcfe"/><rect x="11.20" y="9.90" width="0.40" height="0.75" fill="#d4d4d4"/><rect x="11.60" y="9.90" width="1.60" height="0.75" fill="#dcdcaa"/><rect x="13.20" y="9.90" width="0.40" height="0.75" fill="#d4d4d4"/><rect x="13.60" y="9.90" width="1.60" height="0.75" fill="#569cd6"/><rect x="15.20" y="9.90" width="0.40" height="0.75" fill="#d4d4d4"/><rect x="16.00" y="9.90" width="1.60" height="0.75" fill="#569cd6"/><rect x="17.60" y="9.90" width="0.40" height="0.75" fill="#d4d4d4"/><rect x="18.00" y="9.90" width="2.40" height="0.75" fill="#9cdcfe"/><rect x="20.40" y="9.90" width="0.40" height="0.75" fill="#d4d4d4"/><rect x="20.80" y="9.90" width="1.60" height="0.75" fill="#dcdcaa"/><rect x="22.40" y="9.90" width="0.40" height="0.75" fill="#d4d4d4"/><rect x="22.80" y="9.90" width="1.60" height="0.75" fill="#569cd6"/><rect x="24.40" y="9.90" width="1.20" height="0.75" fill="#d4d4d4"/><rect x="3.20" y="10.80" width="0.80" height="0.75" fill="#6a9955"/><rect x="4.40" y="10.80" width="3.60" height="0.75" fill="#6a9955"/><rect x="8.40" y="10.80" width="4.80" height="0.75" fill="#6a9955"/><rect x="13.60" y="10.80" width="2.40" height="0.75" fill="#6a9955"/><rect x="3.20" y="11.70" width="1.60" height="0.75" fill="#569cd6"/><rect x="4.80" y="11.70" width="0.40" height="0.75" fill="#d4d4d4"/><rect x="5.20" y="11.70" width="2.40" height="0.75" fill="#9cdcfe"/><rect x="8.00" y="11.70" width="0.40" height="0.75" fill="#d4d4d4"/><rect x="8.80" y="11.70" width="2.40" height="0.75" fill="#9cdcfe"/><rect x="11.20" y="11.70" width="0.40" height="0.75" fill="#d4d4d4"/><rect x="11.60" y="11.70" width="1.60" height="0.75" fill="#dcdcaa"/><rect x="13.20" y="11.70" width="0.40" height="0.75" fill="#d4d4d4"/><rect x="13.60" y="11.70" width="1.60" height="0.75" fill="#569cd6"/><rect x="15.20" y="11.70" width="0.40" height="0.75" fill="#d4d4d4"/><rect x="16.00" y="11.70" width="1.60" height="0.75" fill="#569cd6"/><rect x="17.60" y="11.70" width="0.40" height="0.75" fill="#d4d4d4"/><rect x="18.00" y="11.70" width="2.40" height="0.75" fill="#9cdcfe"/><rect x="20.40" y="11.70" width="0.40" height="0.75" fill="#d4d4d4"/><rect x="20.80" y="11.70" width="1.60" height="0.75" fill="#dcdcaa"/><rect x="22.40" y="11.70" width="0.40" height="0.75" fill="#d4d4d4"/><rect x="22.80" y="11.70" width="1.60" height="0.75" fill="#569cd6"/><rect x="24.40" y="11.70" width="1.20" height="0.75" fill="#d4d4d4"/><rect x="3.20" y="12.60" width="1.60" height="0.75" fill="#569cd6"/><rect x="4.80" y="12.60" width="0.40" height="0.75" fill="#d4d4d4"/><rect x="5.20" y="12.60" width="2.80" height="0.75" fill="#9cdcfe"/><rect x="8.00" y="12.60" width="0.40" height="0.75" fill="#d4d4d4"/><rect x="8.40" y="12.60" width="2.80" height="0.75" fill="#dcdcaa"/><rect x="11.60" y="12.60" width="0.40" height="0.75" fill="#d4d4d4"/><rect x="12.40" y="12.60" width="0.80" height="0.75" fill="#d4d4d4"/><rect x="13.60" y="12.60" width="0.80" height="0.75" fill="#569cd6"/><rect x="14.80" y="12.60" width="0.40" height="0.75" fill="#d4d4d4"/><rect x="4.80" y="13.50" width="1.60" height="0.75" fill="#569cd6"/><rect x="6.40" y="13.50" width="0.40" height="0.75" fill="#d4d4d4"/><rect x="6.80" y="13.50" width="2.40" height="0.75" fill="#9cdcfe"/><rect x="9.20" y="13.50" width="0.40" height="0.75" fill="#d4d4d4"/><rect x="9.60" y="13.50" width="1.60" height="0.75" fill="#dcdcaa"/><rect x="11.20" y="13.50" width="0.40" height="0.75" fill="#d4d4d4"/><rect x="11.60" y="13.50" width="5.60" height="0.75" fill="#ce9178"/><rect x="17.20" y="13.50" width="0.40" height="0.75" fill="#d4d4d4"/><rect x="18.00" y="13.50" width="0.40" height="0.75" fill="#d4d4d4"/><rect x="18.80" y="13.50" width="2.80" height="0.75" fill="#9cdcfe"/><rect x="21.60" y="13.50" width="0.40" height="0.75" fill="#d4d4d4"/><rect x="22.40" y="13.50" width="2.40" height="0.75" fill="#ce9178"/><rect x="25.20" y="13.50" width="2.80" height="0.75" fill="#ce9178"/><rect x="28.40" y="13.50" width="1.20" height="0.75" fill="#d4d4d4"/><rect x="3.20" y="14.40" width="0.40" height="0.75" fill="#d4d4d4"/><rect x="1.60" y="15.30" width="0.40" height="0.75" fill="#d4d4d4"/><rect x="0.00" y="16.20" width="0.40" height="0.75" fill="#d4d4d4"/><rect x="0.00" y="18.00" width="1.20" height="0.75" fill="#6a9955"/><rect x="0.40" y="18.90" width="0.40" height="0.75" fill="#6a9955"/><rect x="1.20" y="18.90" width="2.40" height="0.75" fill="#569cd6"/><rect x="4.00" y="18.90" width="2.40" height="0.75" fill="#4ec9b0"/><rect x="0.40" y="19.80" width="0.40" height="0.75" fill="#6a9955"/><rect x="1.20" y="19.80" width="1.60" height="0.75" fill="#6a9955"/><rect x="3.20" y="19.80" width="2.00" height="0.75" fill="#6a9955"/><rect x="5.60" y="19.80" width="0.80" height="0.75" fill="#6a9955"/><rect x="6.80" y="19.80" width="2.40" height="0.75" fill="#6a9955"/><rect x="9.60" y="19.80" width="1.60" height="0.75" fill="#6a9955"/><rect x="11.60" y="19.80" width="0.40" height="0.75" fill="#6a9955"/><rect x="12.40" y="19.80" width="1.60" height="0.75" fill="#6a9955"/><rect x="14.40" y="19.80" width="2.80" height="0.75" fill="#6a9955"/><rect x="17.60" y="19.80" width="0.80" height="0.75" fill="#6a9955"/><rect x="18.80" y="19.80" width="1.20" height="0.75" fill="#6a9955"/><rect x="20.40" y="19.80" width="2.40" height="0.75" fill="#6a9955"/><rect x="23.20" y="19.80" width="4.80" height="0.75" fill="#6a9955"/><rect x="0.40" y="20.70" width="0.80" height="0.75" fill="#6a9955"/><rect x="0.00" y="21.60" width="3.20" height="0.75" fill="#569cd6"/><rect x="3.60" y="21.60" width="2.40" height="0.75" fill="#dcdcaa"/><rect x="6.00" y="21.60" width="0.40" height="0.75" fill="#d4d4d4"/><rect x="6.40" y="21.60" width="4.40" height="0.75" fill="#9cdcfe"/><rect x="10.80" y="21.60" width="0.40" height="0.75" fill="#d4d4d4"/><rect x="11.60" y="21.60" width="0.80" height="0.75" fill="#d4d4d4"/><rect x="12.80" y="21.60" width="0.80" height="0.75" fill="#569cd6"/><rect x="14.00" y="21.60" width="1.60" height="0.75" fill="#4ec9b0"/><rect x="15.60" y="21.60" width="0.40" height="0.75" fill="#d4d4d4"/><rect x="16.40" y="21.60" width="0.40" height="0.75" fill="#d4d4d4"/><rect x="0.80" y="22.50" width="4.40" height="0.75" fill="#dcdcaa"/><rect x="5.20" y="22.50" width="1.20" height="0.75" fill="#d4d4d4"/><rect x="0.80" y="23.40" width="1.60" height="0.75" fill="#569cd6"/><rect x="2.40" y="23.40" width="0.40" height="0.75" fill="#d4d4d4"/><rect x="2.80" y="23.40" width="3.60" height="0.75" fill="#9cdcfe"/><rect x="6.40" y="23.40" width="0.40" height="0.75" fill="#d4d4d4"/><rect x="6.80" y="23.40" width="4.40" height="0.75" fill="#9cdcfe"/><rect x="11.20" y="23.40" width="0.40" height="0.75" fill="#d4d4d4"/><rect x="11.60" y="23.40" width="4.40" height="0.75" fill="#dcdcaa"/><rect x="16.00" y="23.40" width="1.20" height="0.75" fill="#d4d4d4"/><rect x="0.00" y="24.30" width="0.40" height="0.75" fill="#d4d4d4"/><rect x="0.00" y="26.10" width="1.20" height="0.75" fill="#6a9955"/><rect x="0.40" y="27.00" width="0.40" height="0.75" fill="#6a9955"/><rect x="1.20" y="27.00" width="2.40" height="0.75" fill="#569cd6"/><rect x="4.00" y="27.00" width="2.40" height="0.75" fill="#4ec9b0"/><rect x="0.40" y="27.90" width="0.40" height="0.75" fill="#6a9955"/><rect x="1.20" y="27.90" width="1.60" height="0.75" fill="#6a9955"/><rect x="3.20" y="27.90" width="2.00" height="0.75" fill="#6a9955"/><rect x="5.60" y="27.90" width="0.80" height="0.75" fill="#6a9955"/><rect x="6.80" y="27.90" width="2.40" height="0.75" fill="#6a9955"/><rect x="9.60" y="27.90" width="1.60" height="0.75" fill="#6a9955"/><rect x="11.60" y="27.90" width="1.60" height="0.75" fill="#6a9955"/><rect x="13.60" y="27.90" width="1.60" height="0.75" fill="#6a9955"/><rect x="15.60" y="27.90" width="0.80" height="0.75" fill="#6a9955"/><rect x="16.80" y="27.90" width="3.20" height="0.75" fill="#6a9955"/><rect x="0.40" y="28.80" width="0.80" height="0.75" fill="#6a9955"/><rect x="0.00" y="29.70" width="3.20" height="0.75" fill="#569cd6"/><rect x="3.60" y="29.70" width="2.40" height="0.75" fill="#dcdcaa"/><rect x="6.00" y="29.70" width="0.40" height="0.75" fill="#d4d4d4"/><rect x="6.40" y="29.70" width="4.40" height="0.75" fill="#9cdcfe"/><rect x="10.80" y="29.70" width="0.40" height="0.75" fill="#d4d4d4"/><rect x="11.60" y="29.70" width="0.80" height="0.75" fill="#d4d4d4"/><rect x="12.80" y="29.70" width="0.80" height="0.75" fill="#569cd6"/><rect x="14.00" y="29.70" width="1.60" height="0.75" fill="#4ec9b0"/><rect x="15.60" y="29.70" width="0.40" height="0.75" fill="#d4d4d4"/><rect x="16.40" y="29.70" width="0.40" height="0.75" fill="#d4d4d4"/><rect x="1.60" y="30.60" width="4.40" height="0.75" fill="#dcdcaa"/><rect x="6.00" y="30.60" width="1.20" height="0.75" fill="#d4d4d4"/><rect x="1.60" y="31.50" width="2.80" height="0.75" fill="#9cdcfe"/><rect x="4.40" y="31.50" width="0.40" height="0.75" fill="#d4d4d4"/><rect x="4.80" y="31.50" width="1.60" height="0.75" fill="#dcdcaa"/><rect x="6.40" y="31.50" width="0.40" height="0.75" fill="#d4d4d4"/><rect x="6.80" y="31.50" width="2.80" height="0.75" fill="#ce9178"/><rect x="10.00" y="31.50" width="2.40" height="0.75" fill="#ce9178"/><rect x="12.40" y="31.50" width="0.80" height="0.75" fill="#d4d4d4"/><rect x="1.60" y="32.40" width="1.60" height="0.75" fill="#569cd6"/><rect x="3.20" y="32.40" width="0.40" height="0.75" fill="#d4d4d4"/><rect x="3.60" y="32.40" width="3.60" height="0.75" fill="#9cdcfe"/><rect x="7.20" y="32.40" width="0.40" height="0.75" fill="#d4d4d4"/><rect x="7.60" y="32.40" width="6.00" height="0.75" fill="#9cdcfe"/><rect x="14.00" y="32.40" width="0.40" height="0.75" fill="#d4d4d4"/><rect x="14.80" y="32.40" width="2.00" height="0.75" fill="#569cd6"/><rect x="16.80" y="32.40" width="0.40" height="0.75" fill="#d4d4d4"/><rect x="1.60" y="33.30" width="1.60" height="0.75" fill="#569cd6"/><rect x="3.20" y="33.30" width="0.40" height="0.75" fill="#d4d4d4"/><rect x="3.60" y="33.30" width="3.60" height="0.75" fill="#9cdcfe"/><rect x="7.20" y="33.30" width="0.40" height="0.75" fill="#d4d4d4"/><rect x="7.60" y="33.30" width="4.40" height="0.75" fill="#9cdcfe"/><rect x="12.40" y="33.30" width="0.40" height="0.75" fill="#d4d4d4"/><rect x="13.20" y="33.30" width="1.20" height="0.75" fill="#569cd6"/><rect x="14.80" y="33.30" width="6.00" height="0.75" fill="#4ec9b0"/><rect x="20.80" y="33.30" width="1.20" height="0.75" fill="#d4d4d4"/></svg>
  <div class="a" style="left:303.8px;top:13px;width:4.2px;height:274px;background:#1b1b1b;border-left:0.6px solid #282828"></div>
  <div class="a" style="left:304px;top:83px;width:4px;height:2px;background:#474747"></div>
</div>


<div id="panel" class="a">
  <div class="a" style="left:43.3px;top:-1px;width:45.3px;height:0.9px;background:#1d3a58"></div>
  <svg class="a" style="left:3.7px;top:4.4px" width="3.6" height="3.6" viewBox="0 0 10 10"><circle cx="5" cy="5" r="4.8" fill="#b0b0b0"/><rect x="4.2" y="2" width="1.6" height="4" fill="#1e1e1e"/><rect x="4.2" y="6.8" width="1.6" height="1.4" fill="#1e1e1e"/></svg>
  <div class="t pt" style="left:10.1px;top:3.5px">Problems</div>
  <svg class="a" style="left:47.1px;top:4.4px" width="5" height="4" viewBox="0 0 10 8"><path d="M0.8 1 L3.4 3.4 L0.8 5.8" fill="none" stroke="#d0d0d0" stroke-width="1.1"/><path d="M4.6 7 H9.4" stroke="#d0d0d0" stroke-width="1.1"/></svg>
  <div class="t pt" style="left:53.4px;top:4.9px;color:#e8e8e8;-webkit-text-stroke:0.12px #e8e8e8;font-size:4.95px">Terminal 1</div>
  <svg class="a" style="left:80.8px;top:4.8px" width="3.2" height="3.2" viewBox="0 0 3 3"><path d="M0.3 0.3 L2.7 2.7 M2.7 0.3 L0.3 2.7" stroke="#bdbdbd" stroke-width="0.6"/></svg>
  <svg class="a" style="left:92.6px;top:3.8px" width="5.6" height="5.2" viewBox="0 0 10 10"><path d="M8.4 4 A3.6 3.6 0 0 0 1.8 3.2 M1.6 6 A3.6 3.6 0 0 0 8.2 6.8" fill="none" stroke="#3c86d0" stroke-width="1.4"/><path d="M8.8 1.2 V4.2 H5.8 M1.2 8.8 V5.8 H4.2" fill="none" stroke="#3c86d0" stroke-width="1.2"/></svg>
  <div class="t pt" style="left:99.2px;top:4px;font-size:5.3px">Task: watch - workspace/tsconfig.json</div>
  <svg class="a" style="left:204.4px;top:3px" width="3" height="6" viewBox="0 0 3 6"><circle cx="1.5" cy="0.9" r="0.6" fill="#b8b8b8"/><path d="M0.6 2.2 H1.9 V5 M0.5 5.2 H2.6" fill="none" stroke="#b8b8b8" stroke-width="0.8"/></svg>
  <div class="t pt" style="left:210.1px;top:3.5px">Device Logs</div>
  <svg class="a" style="left:605.2px;top:2.9px" width="6" height="5.2" viewBox="0 0 12 10"><rect x="0.9" y="0.9" width="10.2" height="8.2" rx="2" fill="none" stroke="#c8c8c8" stroke-width="1.6"/><path d="M6 1 V9" stroke="#c8c8c8" stroke-width="1.3"/></svg>
  <div class="t term" style="top:15.2px"><span style="color:#33a860">&#10140;</span>  <span style="color:#39a3d0">/projects</span> cd workspace</div>
  <div class="t term" style="top:20.8px"><span style="color:#33a860">&#10140;</span>  <span style="color:#39a3d0">workspace</span> <span style="color:#3b84dc">git:(</span><span style="color:#d84a4a">master</span><span style="color:#3b84dc">)</span> <span style="background:#d8d8d8">&#160;</span></div>
</div>


<div id="ract" class="a">
  <div class="a" style="left:0;top:0;width:0.8px;height:380px;background:#2a2a2a"></div>
  <svg class="a" style="left:0;top:0" width="20" height="80" viewBox="0 0 20 80">
    <path d="M11 8.3 H6.6 A1 1 0 0 0 5.6 9.3 V12.7 A1 1 0 0 0 6.6 13.7 H11.4 A1 1 0 0 0 12.4 12.7 V11" fill="none" stroke="#8c8c8c" stroke-width="1"/>
    <path d="M14.6 7.2 L9.4 12.4" stroke="#8c8c8c" stroke-width="1.5" stroke-linecap="round"/>
    <path d="M14.3 26.3 L9.8 31.6" stroke="#8c8c8c" stroke-width="1.6" stroke-linecap="round"/>
    <path d="M9.3 31.2 C7.6 31 6.2 32.4 5.6 35.2 C8.6 35.6 10.6 34.2 10.5 32.4 Z" fill="#8c8c8c"/>
    <g fill="#8a8a8a">
      <rect x="5.2" y="46.8" width="2.2" height="1.1"/><rect x="8.2" y="46.8" width="6.8" height="1.1"/>
      <rect x="5.2" y="48.8" width="2.2" height="1.1"/><rect x="8.2" y="48.8" width="6.8" height="1.1"/>
      <rect x="5.2" y="50.8" width="2.2" height="1.1"/><rect x="8.2" y="50.8" width="6.8" height="1.1"/>
      <rect x="5.2" y="52.8" width="2.2" height="1.1"/><rect x="8.2" y="52.8" width="6.8" height="1.1"/>
    </g>
    <path d="M4.4 68 L9.6 65.8 L15 68 V73.4 L9.6 75.6 L4.4 73.4 Z" fill="#7a7a7a"/>
    <path d="M4.4 68 L9.6 70.2 L15 68 M9.6 70.2 V75.6" fill="none" stroke="#505050" stroke-width="0.7"/>
  </svg>
</div>


<div id="status" class="a">
  <svg class="a" style="left:6.4px;top:1.7px" width="4" height="5" viewBox="0 0 8 10"><path d="M1.5 0.5 V9.5 M1.5 6.5 C1.5 4 6.5 5 6.5 2" fill="none" stroke="#e6eefa" stroke-width="1.3"/></svg>
  <div class="t st" style="left:12.2px">master</div>
  <svg class="a" style="left:33.4px;top:1.9px" width="4" height="4.2" viewBox="0 0 8 8"><path d="M1 1 H7 V7 H1 Z" fill="none" stroke="#e6eefa" stroke-width="1.2"/></svg>
  <svg class="a" style="left:41.8px;top:1.6px" width="5" height="5" viewBox="0 0 10 10"><circle cx="5" cy="5" r="4.4" fill="#eef4fc"/><path d="M3.2 3.2 L6.8 6.8 M6.8 3.2 L3.2 6.8" stroke="#2b6dc0" stroke-width="1.4"/></svg>
  <div class="t st" style="left:47.4px">0</div>
  <svg class="a" style="left:51.4px;top:1.4px" width="5.6" height="5" viewBox="0 0 11 10"><path d="M5.5 0.3 L10.8 9.7 H0.2 Z" fill="#eef4fc"/><rect x="4.8" y="3.2" width="1.4" height="3.6" fill="#2b6dc0"/><rect x="4.8" y="7.6" width="1.4" height="1.2" fill="#2b6dc0"/></svg>
  <div class="t st" style="left:57.6px">1</div>
  <svg class="a" style="left:64.6px;top:1.6px" width="5" height="5" viewBox="0 0 10 10"><path d="M1 1 L9 9 M9 1 L1 9" stroke="#eef4fc" stroke-width="1.6"/><circle cx="2" cy="2" r="1.6" fill="#eef4fc"/><circle cx="8" cy="2" r="1.6" fill="#eef4fc"/></svg>
  <div class="t st" style="left:70.2px">1</div>
  <svg class="a" style="left:81.2px;top:2px" width="5" height="4" viewBox="0 0 10 8"><circle cx="3.4" cy="4" r="2.6" fill="none" stroke="#cfe0f6" stroke-width="1"/><circle cx="6.6" cy="4" r="2.6" fill="none" stroke="#cfe0f6" stroke-width="1"/></svg>
  <div class="t st" style="left:86.7px">Previews</div>
  <div class="t st" style="left:608.6px">Ln 21, Col 17</div>
  <div class="t st" style="left:641.4px">3.4.5</div>
  <div class="t st" style="left:657.8px">LF</div>
  <div class="t st" style="left:668.2px">UTF-8</div>
  <div class="t st" style="left:687.9px">Spaces: 4</div>
  <div class="t st" style="left:715.4px">TypeScript</div>
  <svg class="a" style="left:744.4px;top:1.6px" width="4.4" height="5.4" viewBox="0 0 8 10"><path d="M4 0.6 C1.6 0.6 1.4 3 1.4 5 L0.4 7.8 H7.6 L6.6 5 C6.6 3 6.4 0.6 4 0.6 Z" fill="#f2f6fc"/><circle cx="4" cy="8.8" r="1.1" fill="#f2f6fc"/></svg>
  <div class="t st" style="left:749.4px">1</div>
  <svg class="a" style="left:757.4px;top:1.7px" width="5.8" height="5" viewBox="0 0 11 9.5"><rect x="0" y="0" width="11" height="9.5" rx="1.8" fill="#eef3fb"/><rect x="2" y="3" width="7" height="3.2" fill="#2b6dc0"/></svg>
</div>

</body></html>
